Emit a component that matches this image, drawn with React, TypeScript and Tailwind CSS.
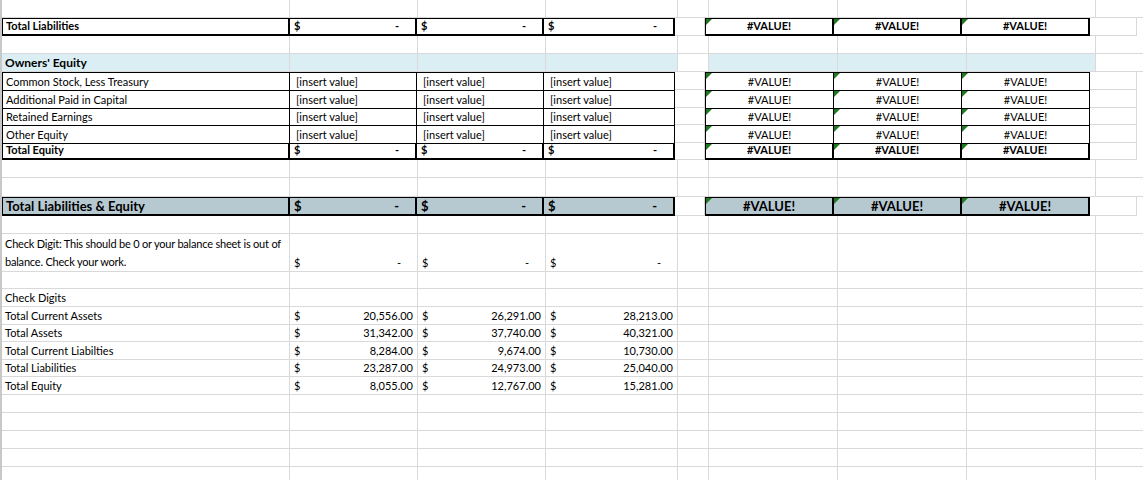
import React from "react";

const W = [288, 128, 128, 132, 31, 129, 129, 129, 48];

type C = { t?: React.ReactNode; cls?: string; box?: boolean; thick?: boolean; tri?: boolean; bg?: string };

function Row({ h, cells, bg }: { h: number; cells: C[]; bg?: string[] }) {
  return (
    <div className="flex" style={{ height: h }}>
      <div className="w-[2px] shrink-0 bg-[#c8c8c8]" />
      {W.map((w, i) => {
        const c = cells[i] || {};
        const b = c.thick
          ? "border border-black border-b-2 border-r-2 -mr-[1px] z-10"
          : c.box
          ? "border border-black -mr-[1px] -mb-[1px] z-10"
          : "border-r border-b border-[#d9d9d9]";
        return (
          <div
            key={i}
            style={{ width: w }}
            className={`relative shrink-0 flex items-end overflow-visible whitespace-nowrap ${b} ${c.bg || (bg && bg[i]) || ""} ${c.cls || ""}`}
          >
            {c.tri && (
              <div className="absolute left-0 top-0 w-0 h-0 border-t-[6px] border-t-[#1e7a1e] border-r-[6px] border-r-transparent" />
            )}
            {c.t}
          </div>
        );
      })}
    </div>
  );
}

const acc = (v: string, bold = false, big = false) => (
  <div className={`flex w-full justify-between px-[4px] ${bold ? "font-bold" : ""} ${big ? "text-[13px]" : ""}`}>
    <span>$</span>
    <span className={v === "-" ? "pr-[12px]" : ""}>{v}</span>
  </div>
);
const lbl = (t: string, cls = "") => <span className={`px-[3px] ${cls}`}>{t}</span>;
const val = (bold = false, big = false): C => ({
  t: <span className={`w-full text-center ${bold ? "font-bold" : ""} ${big ? "text-[13px]" : ""}`}>#VALUE!</span>,
  box: !bold,
  thick: bold,
  tri: true,
});
const ins: C = { t: <span className="px-[6px]">[insert value]</span>, box: true };
const E: C = {};

export default function App() {
  const blue = "bg-[#daeef3]";
  const gray = "bg-[#b7c9d0]";
  const blueRow = [blue, blue, blue, blue, "", blue, blue, blue, ""];
  const checks: [string, string, string, string][] = [
    ["Total Current Assets", "20,556.00", "26,291.00", "28,213.00"],
    ["Total Assets", "31,342.00", "37,740.00", "40,321.00"],
    ["Total Current Liabilties", "8,284.00", "9,674.00", "10,730.00"],
    ["Total Liabilities", "23,287.00", "24,973.00", "25,040.00"],
    ["Total Equity", "8,055.00", "12,767.00", "15,281.00"],
  ];
  const tot = (label: string): C[] => [
    { t: lbl(label, "font-bold"), thick: true },
    { t: acc("-", true), thick: true },
    { t: acc("-", true), thick: true },
    { t: acc("-", true), thick: true },
    E,
    val(true), val(true), val(true),
  ];
  return (
    <div className="w-[1143px] h-[480px] overflow-hidden bg-white text-[11px] leading-[16px] text-black" style={{ fontFamily: "Lato, 'Open Sans', sans-serif" }}>
      <Row h={18} cells={[]} />
      <Row h={18} cells={tot("Total Liabilities")} />
      <Row h={18} cells={[]} />
      <Row h={18} bg={blueRow} cells={[{ t: lbl("Owners' Equity", "font-bold text-[12px]") }]} />
      {["Common Stock, Less Treasury", "Additional Paid in Capital", "Retained Earnings", "Other Equity"].map((t, i) => (
        <Row key={t} h={i === 2 ? 17 : 18} cells={[{ t: lbl(t), box: true }, ins, ins, ins, E, val(), val(), val()]} />
      ))}
      <Row h={17} cells={tot("Total Equity")} />
      <Row h={18} cells={[]} />
      <Row h={19} cells={[]} />
      <Row
        h={19}
        cells={[
          { t: lbl("Total Liabilities & Equity", "font-bold text-[13px]"), thick: true, bg: gray },
          { t: acc("-", true, true), thick: true, bg: gray },
          { t: acc("-", true, true), thick: true, bg: gray },
          { t: acc("-", true, true), thick: true, bg: gray },
          E,
          { ...val(true, true), bg: gray },
          { ...val(true, true), bg: gray },
          { ...val(true, true), bg: gray },
        ]}
      />
      <Row h={18} cells={[]} />
      <Row
        h={38}
        cells={[
          { t: <span className="pl-[3px] pr-[8px] whitespace-normal leading-[18px] tracking-[-0.2px]">Check Digit: This should be 0 or your balance sheet is out of balance. Check your work.</span> },
          { t: acc("-") },
          { t: acc("-") },
          { t: acc("-") },
        ]}
      />
      <Row h={17} cells={[]} />
      <Row h={18} cells={[{ t: lbl("Check Digits") }]} />
      {checks.map(([a, b, c, d]) => (
        <Row key={a} h={17.5} cells={[{ t: lbl(a) }, { t: acc(b) }, { t: acc(c) }, { t: acc(d) }]} />
      ))}
      {[0, 1, 2, 3, 4, 5].map((i) => (
        <Row key={i} h={18} cells={[]} />
      ))}
    </div>
  );
}
